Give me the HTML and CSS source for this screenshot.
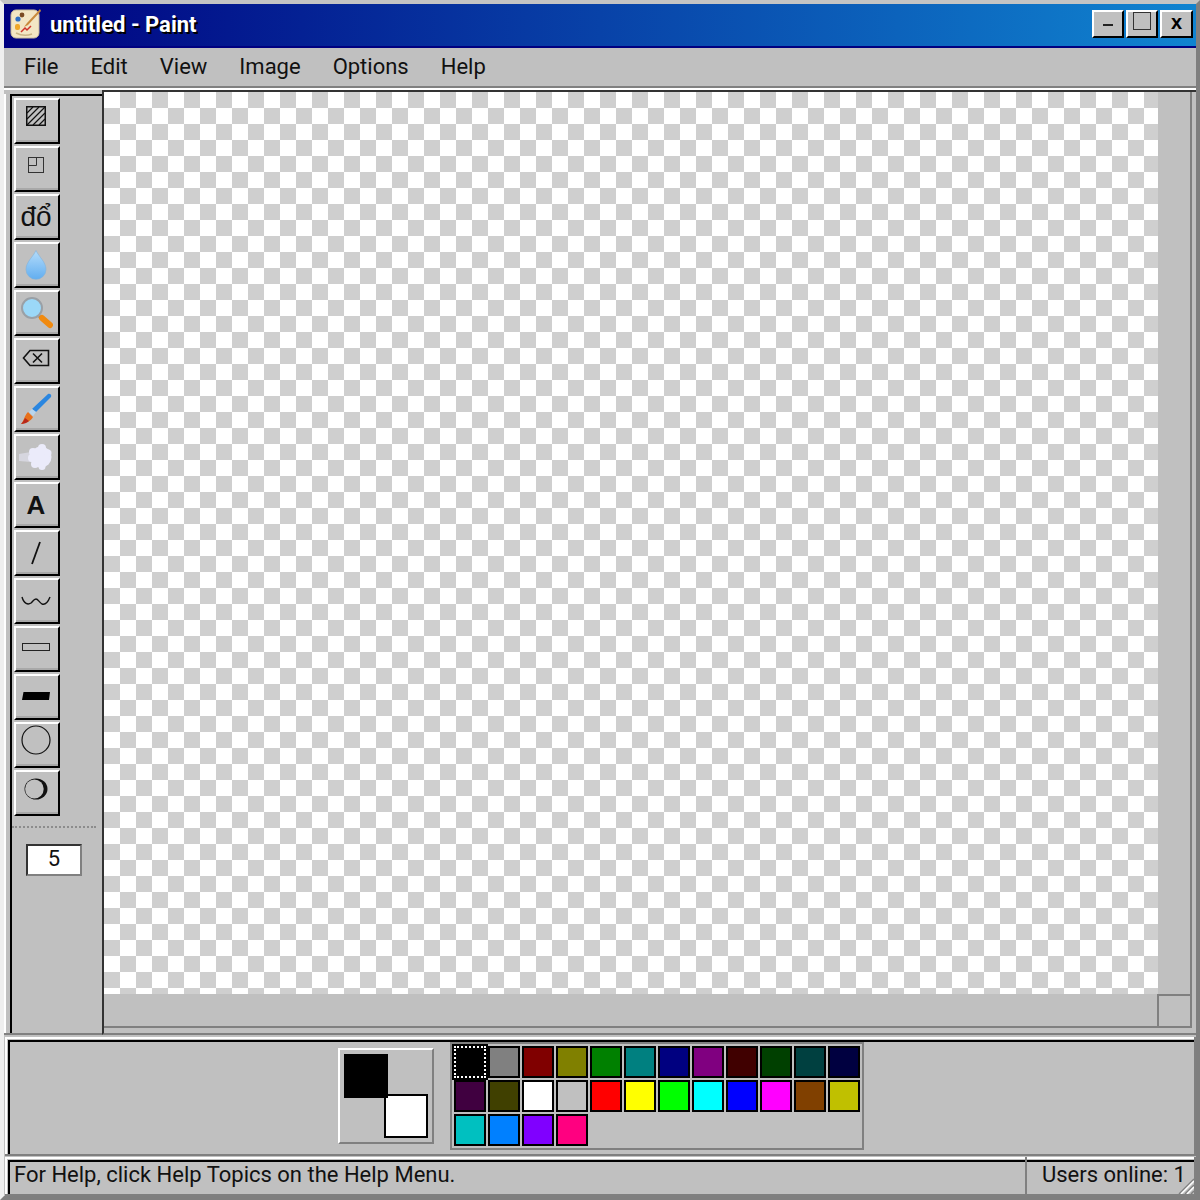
FILE: index.html
```html
<!DOCTYPE html>
<html lang="en">
<head>
  <meta charset="UTF-8">
  <title>untitled - Paint</title>
  <link rel="stylesheet" href="styles.css">
</head>
<body>
  <div class="window">
    <div class="titlebar">
      <svg class="app-icon" width="32" height="32" viewBox="0 0 32 32">
        <rect x="1" y="2" width="28" height="28" rx="5" fill="#f3e6c4" stroke="#cbbd9c"/>
        <circle cx="8" cy="11" r="2.6" fill="#2f6fc4"/>
        <circle cx="12" cy="7" r="2.4" fill="#7a4a22"/>
        <rect x="5" y="16" width="5" height="6" rx="2" fill="#f0a82a"/>
        <path d="M30 1 L17 15 L14 19 L18 17 L31 3 Z" fill="#c98a3c"/>
        <path d="M11 24 L15 20 L17 22 L21 18" fill="none" stroke="#d0322a" stroke-width="1.5"/>
        <path d="M6 25 Q14 29 22 26" fill="none" stroke="#c9b486" stroke-width="1.5"/>
      </svg>
      <span class="title">untitled - Paint</span>
      <div class="win-buttons">
        <button class="win-btn"><span class="min-mark"></span></button>
        <button class="win-btn"><span class="max-mark"></span></button>
        <button class="win-btn close-btn">x</button>
      </div>
    </div>

    <div class="menubar">
      <span>File</span>
      <span>Edit</span>
      <span>View</span>
      <span>Image</span>
      <span>Options</span>
      <span>Help</span>
    </div>

    <div class="workspace">
      <div class="toolbox">
        <div class="tools">
          <button class="tool up-5">
            <svg width="20" height="20" viewBox="0 0 20 20">
              <rect x=".75" y=".75" width="18.5" height="18.5" fill="none" stroke="#111" stroke-width="1.5"/>
              <path d="M1 7 L7 1 M1 13 L13 1 M1 19 L19 1 M7 19 L19 7 M13 19 L19 13" stroke="#111" stroke-width="1.2"/>
            </svg>
          </button>
          <button class="tool up-4">
            <svg width="16" height="16" viewBox="0 0 16 16">
              <rect x=".5" y=".5" width="15" height="15" fill="none" stroke="#333"/>
              <path d="M.5 8.5 H8.5 V.5" fill="none" stroke="#333"/>
            </svg>
          </button>
          <button class="tool tool-text">đổ</button>
          <button class="tool">
            <svg width="22" height="30" viewBox="0 0 22 30">
              <defs>
                <linearGradient id="dropFill" x1="0" y1="0" x2="0" y2="1">
                  <stop offset="0" stop-color="#b4dcfa"/>
                  <stop offset="1" stop-color="#62aef0"/>
                </linearGradient>
              </defs>
              <path d="M11 .5 C14 7 21 12 21 19.5 A10 9.8 0 0 1 1 19.5 C1 12 8 7 11 .5 Z" fill="url(#dropFill)" stroke="#7fb2dc" stroke-width=".6"/>
            </svg>
          </button>
          <button class="tool">
            <svg width="34" height="34" viewBox="0 0 34 34">
              <path d="M20 20 L23 23" stroke="#9a8a70" stroke-width="3"/>
              <path d="M23 22 L31 29" stroke="#f08a10" stroke-width="6" stroke-linecap="round"/>
              <circle cx="13" cy="12" r="10" fill="#9bd8f8" stroke="#9aa0a6" stroke-width="2"/>
            </svg>
          </button>
          <button class="tool up-3">
            <svg width="28" height="20" viewBox="0 0 28 20">
              <path d="M8 2.5 H26.5 V17.5 H8 L1.5 10 Z" fill="none" stroke="#111" stroke-width="1.6"/>
              <path d="M11 5.5 L20 14.5 M20 5.5 L11 14.5" stroke="#111" stroke-width="1.6"/>
            </svg>
          </button>
          <button class="tool">
            <svg width="34" height="34" viewBox="0 0 34 34">
              <path d="M29 2 C31 1 33 3 32 5 L17 20 L13 17 Z" fill="#2a86e0"/>
              <path d="M17 20 L13 17 L10 20 L14 24 Z" fill="#b9d6ee"/>
              <path d="M9 20 L14 25 C12 29 7 31 2 32 C5 29 5 24 9 20 Z" fill="#e8701a"/>
              <path d="M2 32 C4 30 5 28 6 26 L10 29 C8 31 5 32 2 32 Z" fill="#b8281a"/>
            </svg>
          </button>
          <button class="tool">
            <svg width="34" height="28" viewBox="0 0 34 28">
              <path d="M0 11 L12 9 L12 19 L0 18 Z" fill="#e4e4f4" opacity=".6"/>
              <circle cx="22" cy="14" r="10.5" fill="#ebebfa"/>
              <circle cx="14" cy="9" r="4" fill="#ebebfa"/>
              <circle cx="13" cy="15" r="4" fill="#ebebfa"/>
              <circle cx="16" cy="21" r="4" fill="#ebebfa"/>
              <circle cx="23" cy="5" r="4" fill="#ebebfa"/>
              <circle cx="23" cy="23.5" r="3.5" fill="#ebebfa"/>
              <circle cx="29" cy="10" r="3.5" fill="#ebebfa"/>
            </svg>
          </button>
          <button class="tool tool-letter">A</button>
          <button class="tool">
            <svg width="24" height="24" viewBox="0 0 24 24">
              <path d="M8 23 L16 1" stroke="#111" stroke-width="1.8"/>
            </svg>
          </button>
          <button class="tool">
            <svg width="30" height="12" viewBox="0 0 30 12">
              <path d="M1 2 C3 9 7 10 10 8 C12 6 13 4 15 4 C17 4 18 7 21 9 C24 10 27 7 29 2" fill="none" stroke="#111" stroke-width="1.4"/>
            </svg>
          </button>
          <button class="tool up-2">
            <svg width="28" height="8" viewBox="0 0 28 8">
              <rect x=".5" y=".5" width="27" height="7" fill="none" stroke="#222"/>
            </svg>
          </button>
          <button class="tool up-1">
            <svg width="28" height="8" viewBox="0 0 28 8">
              <path d="M1.5 0 H28 L27 8 H0 Z" fill="#000"/>
            </svg>
          </button>
          <button class="tool up-5">
            <svg width="30" height="30" viewBox="0 0 30 30">
              <circle cx="15" cy="15" r="14" fill="none" stroke="#111" stroke-width="1.2"/>
            </svg>
          </button>
          <button class="tool up-4">
            <svg width="24" height="22" viewBox="0 0 24 22">
              <ellipse cx="12" cy="11" rx="11.5" ry="10.5" fill="#111"/>
              <ellipse cx="10.4" cy="11" rx="9.3" ry="9.5" fill="#c0c0c0"/>
            </svg>
          </button>
        </div>
        <div class="tool-sep"></div>
        <div class="size-box">5</div>
      </div>

      <div class="canvas-area">
        <div class="canvas-row">
          <div class="canvas"></div>
          <div class="v-scroll"></div>
        </div>
        <div class="scroll-row">
          <div class="h-scroll"></div>
          <div class="scroll-corner"></div>
        </div>
      </div>
    </div>

    <div class="colorbar">
      <div class="current-colors">
        <div class="bg-color"></div>
        <div class="fg-color"></div>
      </div>
      <div class="palette">
        <span class="swatch selected c01"></span>
        <span class="swatch c02"></span>
        <span class="swatch c03"></span>
        <span class="swatch c04"></span>
        <span class="swatch c05"></span>
        <span class="swatch c06"></span>
        <span class="swatch c07"></span>
        <span class="swatch c08"></span>
        <span class="swatch c09"></span>
        <span class="swatch c10"></span>
        <span class="swatch c11"></span>
        <span class="swatch c12"></span>
        <span class="swatch c13"></span>
        <span class="swatch c14"></span>
        <span class="swatch c15"></span>
        <span class="swatch c16"></span>
        <span class="swatch c17"></span>
        <span class="swatch c18"></span>
        <span class="swatch c19"></span>
        <span class="swatch c20"></span>
        <span class="swatch c21"></span>
        <span class="swatch c22"></span>
        <span class="swatch c23"></span>
        <span class="swatch c24"></span>
        <span class="swatch c25"></span>
        <span class="swatch c26"></span>
        <span class="swatch c27"></span>
        <span class="swatch c28"></span>
      </div>
    </div>

    <div class="statusbar">
      <div class="status-help">For Help, click Help Topics on the Help Menu.</div>
      <div class="status-users">
        Users online: 1
        <svg class="grip" width="16" height="16" viewBox="0 0 16 16">
          <path d="M1 16 L16 1 M7 16 L16 7 M13 16 L16 13" stroke="#808080" stroke-width="1.5"/>
          <path d="M3 16 L16 3 M9 16 L16 9" stroke="#fff" stroke-width="1.5"/>
        </svg>
      </div>
    </div>
  </div>
</body>
</html>
```

FILE: styles.css
```css
* {
  box-sizing: border-box;
}
body {
  margin: 0;
  font-family: Roboto, "Liberation Sans", sans-serif;
  color: #111;
  background: #c0c0c0;
}
button {
  font-family: inherit;
  padding: 0;
}

.window {
  width: 1200px;
  height: 1200px;
  display: flex;
  flex-direction: column;
  background: #c0c0c0;
  border-style: solid;
  border-width: 4px;
  border-color: #c4c4c4 #7f7f7f #7f7f7f #efefef;
}

/* title bar */
.titlebar {
  height: 44px;
  flex-shrink: 0;
  display: flex;
  align-items: center;
  padding: 0 3px 2px 6px;
  background: linear-gradient(90deg, #000080, #1084d0);
  border-bottom: 2px solid #000080;
}
.app-icon {
  margin-right: 8px;
}
.title {
  color: #fff;
  font-size: 22px;
  font-weight: 700;
  text-shadow: 2px 2px 0 #000;
}
.win-buttons {
  margin-left: auto;
  display: flex;
  gap: 2px;
}
.win-btn {
  width: 32px;
  height: 28px;
  display: flex;
  align-items: center;
  justify-content: center;
  background: #c0c0c0;
  border: 2px solid;
  border-color: #fff #000 #000 #fff;
}
.min-mark {
  width: 10px;
  height: 2px;
  margin-top: 2px;
  background: #222;
}
.max-mark {
  width: 18px;
  height: 18px;
  margin-bottom: 6px;
  border: 1px solid #333;
}
.close-btn {
  width: 33px;
  font-size: 20px;
  font-weight: 900;
  color: #000;
  font-family: "Liberation Sans", sans-serif;
  line-height: 20px;
  padding-bottom: 4px;
}

/* menu */
.menubar {
  height: 40px;
  flex-shrink: 0;
  display: flex;
  align-items: center;
  gap: 32px;
  padding: 0 0 2px 20px;
  font-size: 22px;
  border-bottom: 2px solid #808080;
}

/* tools and canvas */
.workspace {
  flex: 1;
  min-height: 0;
  display: flex;
  border-top: 2px solid #fff;
}
.toolbox {
  width: 98px;
  flex-shrink: 0;
  margin-top: 4px;
  padding-left: 2px;
  border-bottom: 2px solid #808080;
  background: linear-gradient(#000, #000) 6px 0 / 92px 2px no-repeat,
    linear-gradient(#000, #000) 6px 0 / 2px 100% no-repeat,
    linear-gradient(#fff, #fff) 0 0 / 2px 100% no-repeat;
}
.tools {
  display: flex;
  flex-direction: column;
  gap: 2px;
  padding: 4px 0 0 8px;
}
.tool {
  width: 46px;
  height: 46px;
  display: flex;
  align-items: center;
  justify-content: center;
  padding-right: 2px;
  background: #c0c0c0;
  border: 2px solid;
  border-color: #fff #000 #000 #fff;
  box-shadow: inset 0 -2px 0 #a8a8a8;
  color: #111;
}
.up-1 {
  padding-bottom: 2px;
}
.up-2 {
  padding-bottom: 4px;
}
.up-3 {
  padding-bottom: 6px;
}
.up-4 {
  padding-bottom: 8px;
}
.up-5 {
  padding-bottom: 10px;
}
.tool-text {
  font-size: 28px;
  font-family: "Liberation Sans", sans-serif;
}
.tool-letter {
  font-size: 26px;
  font-weight: 700;
  font-family: "Liberation Sans", sans-serif;
}
.tool-sep {
  margin: 10px 6px 0 6px;
  border-top: 2px dotted #8c8c8c;
}
.size-box {
  width: 56px;
  height: 32px;
  margin: 16px 0 0 20px;
  background: #fff;
  border: 2px solid;
  border-color: #333 #808080 #808080 #333;
  text-align: center;
  font-size: 22px;
  line-height: 25px;
}
.canvas-area {
  flex: 1;
  min-width: 0;
  display: flex;
  flex-direction: column;
  padding-bottom: 5px;
  border-left: 2px solid #333;
  border-top: 2px solid #333;
  border-bottom: 2px solid #808080;
}
.canvas-row {
  flex: 1;
  min-height: 0;
  display: flex;
  margin-right: 4px;
}
.canvas {
  flex: 1;
  background: repeating-conic-gradient(#cfcfcf 0 25%, #fff 0 50%) 0 0 / 32px 32px;
}
.v-scroll {
  width: 34px;
  border-right: 2px solid #808080;
}
.scroll-row {
  height: 34px;
  flex-shrink: 0;
  display: flex;
  margin-right: 4px;
  border-bottom: 2px solid #808080;
}
.h-scroll {
  flex: 1;
}
.scroll-corner {
  width: 35px;
  border-left: 2px solid #808080;
  border-top: 2px solid #808080;
  border-right: 2px solid #808080;
}

/* colours */
.colorbar {
  height: 119px;
  flex-shrink: 0;
  display: flex;
  align-items: flex-start;
  margin: 2px 0 0 1px;
  padding: 5px 0 0 333px;
  border-right: 2px solid #808080;
  border-bottom: 2px solid #808080;
  box-shadow: inset 2px 2px 0 #fff, inset 3px 3px 0 #c0c0c0, inset 5px 5px 0 #000;
}
.current-colors {
  width: 96px;
  height: 96px;
  position: relative;
  margin-top: 6px;
  border: 2px solid;
  border-color: #fff #808080 #808080 #fff;
}
.bg-color {
  position: absolute;
  left: 44px;
  top: 44px;
  width: 44px;
  height: 44px;
  background: #fff;
  border: 2px solid #000;
}
.fg-color {
  position: absolute;
  left: 4px;
  top: 4px;
  width: 44px;
  height: 44px;
  background: #000;
}
.palette {
  width: 414px;
  height: 108px;
  margin-left: 16px;
  padding: 2px;
  display: grid;
  grid-template-columns: repeat(12, 32px);
  grid-auto-rows: 32px;
  gap: 2px;
  border: 2px solid #808080;
}
.swatch {
  border: 2px solid #000;
}
.selected {
  border: 2px dotted #fff;
  outline: 2px solid #000;
}
.c01 { background: #000; }
.c02 { background: #808080; }
.c03 { background: #800000; }
.c04 { background: #808000; }
.c05 { background: #008000; }
.c06 { background: #008080; }
.c07 { background: #000080; }
.c08 { background: #800080; }
.c09 { background: #400000; }
.c10 { background: #004000; }
.c11 { background: #004040; }
.c12 { background: #000040; }
.c13 { background: #400040; }
.c14 { background: #404000; }
.c15 { background: #fff; }
.c16 { background: #c0c0c0; }
.c17 { background: #f00; }
.c18 { background: #ff0; }
.c19 { background: #0f0; }
.c20 { background: #0ff; }
.c21 { background: #00f; }
.c22 { background: #f0f; }
.c23 { background: #804000; }
.c24 { background: #c0c000; }
.c25 { background: #00c0c0; }
.c26 { background: #0080ff; }
.c27 { background: #8000ff; }
.c28 { background: #ff0080; }

/* status */
.statusbar {
  height: 39px;
  flex-shrink: 0;
  display: flex;
  margin: 1px 0 0 1px;
  padding-top: 5px;
  font-size: 22px;
  line-height: 26px;
  border-right: 2px solid #808080;
  border-bottom: 2px solid #808080;
  box-shadow: inset 2px 2px 0 #fff, inset 3px 3px 0 #c0c0c0, inset 5px 5px 0 #000;
}
.status-help {
  flex: 1;
  padding-left: 9px;
}
.status-users {
  width: 169px;
  margin-top: -5px;
  padding: 5px 0 0 15px;
  position: relative;
  border-left: 2px solid #808080;
}
.grip {
  position: absolute;
  right: 0;
  bottom: 0;
}
```
